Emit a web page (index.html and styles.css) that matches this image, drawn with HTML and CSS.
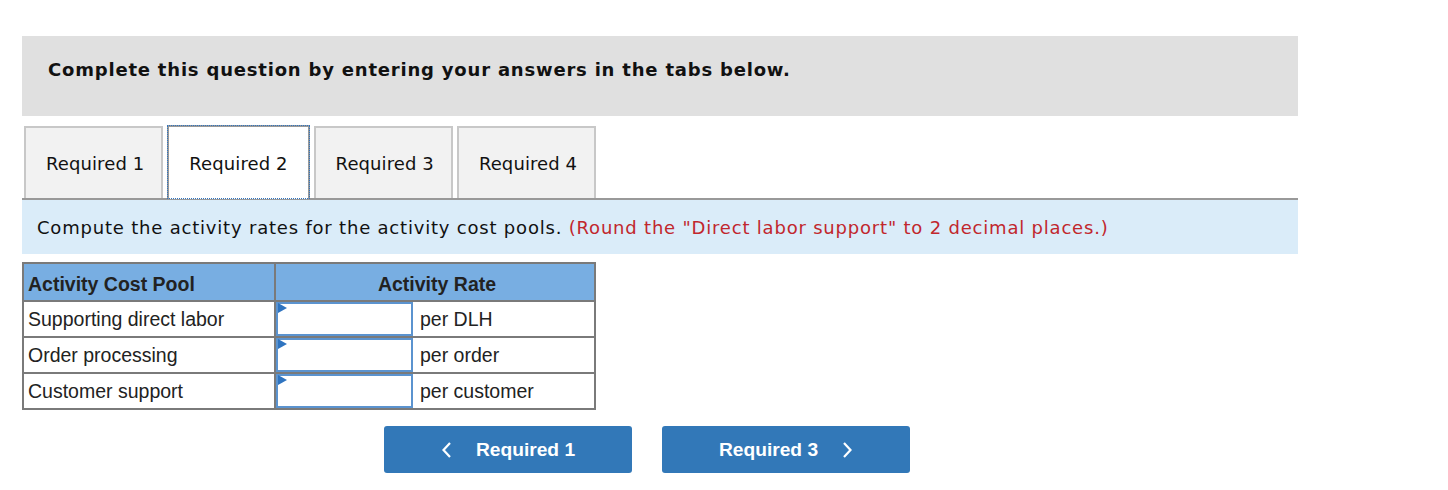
FILE: index.html
```html
<!DOCTYPE html>
<html>
<head>
<meta charset="utf-8">
<link rel="stylesheet" href="styles.css">
</head>
<body>
<div class="page">
  <div class="banner">
    <h1 class="banner-title">Complete this question by entering your answers in the tabs below.</h1>
  </div>
  <div class="tabs">
    <div class="tab">Required 1</div>
    <div class="tab active">Required 2</div>
    <div class="tab">Required 3</div>
    <div class="tab">Required 4</div>
  </div>
  <div class="instructions">
    Compute the activity rates for the activity cost pools. <span class="note">(Round the "Direct labor support" to 2 decimal places.)</span>
  </div>
  <table class="grid">
    <thead>
      <tr>
        <th class="col-pool">Activity Cost Pool</th>
        <th class="col-rate" colspan="2">Activity Rate</th>
      </tr>
    </thead>
    <tbody>
      <tr>
        <td class="pool">Supporting direct labor</td>
        <td class="entry"><div class="field"><input class="input" type="text"></div></td>
        <td class="unit">per DLH</td>
      </tr>
      <tr>
        <td class="pool">Order processing</td>
        <td class="entry"><div class="field"><input class="input" type="text"></div></td>
        <td class="unit">per order</td>
      </tr>
      <tr>
        <td class="pool">Customer support</td>
        <td class="entry"><div class="field"><input class="input" type="text"></div></td>
        <td class="unit">per customer</td>
      </tr>
    </tbody>
  </table>
  <div class="nav">
    <button class="nav-btn" type="button">
      <svg class="chev" width="11" height="18" viewBox="0 0 11 18"><path d="M9 2 L2.5 9 L9 16" fill="none" stroke="#fff" stroke-width="2.2"/></svg>
      <span>Required 1</span>
    </button>
    <button class="nav-btn" type="button">
      <span>Required 3</span>
      <svg class="chev" width="11" height="18" viewBox="0 0 11 18"><path d="M2 2 L8.5 9 L2 16" fill="none" stroke="#fff" stroke-width="2.2"/></svg>
    </button>
  </div>
</div>
</body>
</html>
```
FILE: styles.css
```css
* { box-sizing: border-box; }
html, body { margin: 0; padding: 0; background: #fff; }
body { font-family: "DejaVu Sans", Verdana, sans-serif; color: #111; }

.page {
  padding: 36px 0 0 22px;
  width: 1298px;
}

.banner {
  background: #e0e0e0;
  height: 80px;
  padding: 23px 0 0 26px;
}
.banner-title {
  margin: 0;
  font-size: 18px;
  font-weight: bold;
  letter-spacing: 0.8px;
  line-height: 22px;
  color: #111;
}

.tabs {
  display: flex;
  gap: 4px;
  margin-top: 10px;
  padding-left: 2px;
  height: 72px;
  border-bottom: 2px solid #999;
  box-sizing: content-box;
}
.tab {
  height: 72px;
  padding: 0 17px 0 20px;
  display: flex;
  align-items: center;
  background: #f2f2f2;
  border: 2px solid #c8c8c8;
  border-bottom: none;
  font-size: 18px;
  letter-spacing: 0.1px;
  color: #111;
}
.tab.active {
  background: #fff;
  border-color: #999;
  outline: 1px dotted #2f74c0;
  outline-offset: -1px;
  height: 74px;
  margin-top: -1px;
  padding: 0 20px 0 20px;
}

.instructions {
  background: #daecf9;
  height: 54px;
  padding: 17px 0 0 15px;
  font-size: 18px;
  letter-spacing: 0.8px;
  line-height: 22px;
  color: #111;
}
.note { color: #c1272d; }

.grid {
  margin-top: 8px;
  border-collapse: collapse;
  border: 2px solid #7a7a7a;
  font-family: "Liberation Sans", Arial, sans-serif;
  font-size: 19.5px;
  color: #222;
}
.grid th, .grid td {
  border: 2px solid #7a7a7a;
  height: 36px;
  padding: 0 0 0 4px;
  line-height: 22px;
}
.grid th {
  background: #78aee2;
  font-weight: bold;
  height: 38px;
  padding-top: 3px;
}
.col-pool { width: 252px; text-align: left; }
.col-rate { text-align: center; }
.grid td.entry {
  width: 139px;
  padding: 0;
  border-right: none;
}
.grid td.unit {
  width: 181px;
  border-left: none;
  padding-left: 6px;
}
.field {
  position: relative;
  width: 137px;
  height: 34px;
}
.field::before {
  content: "";
  position: absolute;
  left: 2px;
  top: 1px;
  border-left: 9px solid #2f74c0;
  border-top: 5px solid transparent;
  border-bottom: 5px solid transparent;
  pointer-events: none;
}
.input {
  display: block;
  width: 137px;
  height: 34px;
  margin: 0;
  border: 2px solid #5b93cf;
  background: #fff;
  padding: 0;
}

.nav {
  display: flex;
  gap: 30px;
  margin-top: 16px;
  padding-left: 362px;
}
.nav-btn {
  width: 248px;
  height: 47px;
  background: #3278b8;
  border: none;
  border-radius: 3px;
  color: #fff;
  font-family: "Liberation Sans", Arial, sans-serif;
  font-weight: bold;
  font-size: 19.2px;
  display: flex;
  align-items: center;
  justify-content: center;
  gap: 24px;
  padding: 0;
}
.chev { display: block; }
```
